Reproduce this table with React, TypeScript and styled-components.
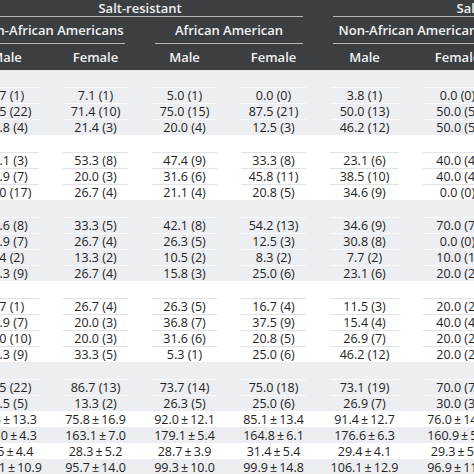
import * as React from "react";
import styled, { createGlobalStyle } from "styled-components";

const Colors = {
  HEAD_BG: "#3c3f42",
  HEAD_TEXT: "#f1f1f1",
  HEAD_RULE: "#b3b6b8",
  BAND: "#eceef1",
  WHITE: "#ffffff",
  TEXT: "#232323",
  RULE_ON_WHITE: "#e1e3e6",
  RULE_ON_BAND: "#f9fafb"
};

type Tone = "band" | "white";

const GlobalStyle = createGlobalStyle`
  body {
    margin: 0;
    background: ${Colors.WHITE};
    font-family: "Open Sans", "DejaVu Sans", sans-serif;
  }
`;

const Frame = styled.div`
  width: 474px;
  height: 474px;
  overflow: hidden;
`;

const Table = styled.table`
  margin-left: -38px;
  table-layout: fixed;
  border-collapse: separate;
  border-spacing: 0;
  width: 716px;
`;

const Col = styled.col<{ $w: number }>`
  width: ${(p) => p.$w}px;
`;

const HeadRow = styled.tr`
  background: ${Colors.HEAD_BG};
`;

const HeadCell = styled.th`
  padding: 0;
  color: ${Colors.HEAD_TEXT};
  font-size: 13px;
  font-weight: 600;
  text-align: center;
  white-space: nowrap;
`;

const HeadLabel = styled.span<{ $h: number; $rule?: boolean }>`
  display: block;
  height: ${(p) => p.$h}px;
  line-height: ${(p) => p.$h}px;
  margin: 0 ${(p) => (p.$rule ? 15 : 0)}px;
  border-bottom: ${(p) => (p.$rule ? `1px solid ${Colors.HEAD_RULE}` : "none")};
`;

const BodyRow = styled.tr<{ $tone: Tone }>`
  background: ${(p) => (p.$tone === "band" ? Colors.BAND : Colors.WHITE)};
`;

const Cell = styled.td`
  padding: 0;
`;

const Spacer = styled.div`
  height: 17px;
`;

const Value = styled.span<{ $tone: Tone; $ruled: boolean }>`
  display: block;
  margin: 0 12px;
  height: 15px;
  line-height: 16px;
  border-top: 1px solid
    ${(p) =>
      !p.$ruled
        ? "transparent"
        : p.$tone === "band"
        ? Colors.RULE_ON_BAND
        : Colors.RULE_ON_WHITE};
  color: ${Colors.TEXT};
  font-size: 12.5px;
  text-align: center;
  white-space: nowrap;
`;

const widths = [89, 89, 89, 89, 93, 93, 87, 87];

const groups: { tone: Tone; rows: string[][] }[] = [
  {
    tone: "band",
    rows: [
      ["3.7 (1)", "7.1 (1)", "5.0 (1)", "0.0 (0)", "3.8 (1)", "0.0 (0)", "4.2 (1)", "0.0 (0)"],
      ["81.5 (22)", "71.4 (10)", "75.0 (15)", "87.5 (21)", "50.0 (13)", "50.0 (5)", "62.5 (15)", "58.3 (7)"],
      ["14.8 (4)", "21.4 (3)", "20.0 (4)", "12.5 (3)", "46.2 (12)", "50.0 (5)", "33.3 (8)", "41.7 (5)"]
    ]
  },
  {
    tone: "white",
    rows: [
      ["11.1 (3)", "53.3 (8)", "47.4 (9)", "33.3 (8)", "23.1 (6)", "40.0 (4)", "37.5 (9)", "25.0 (3)"],
      ["25.9 (7)", "20.0 (3)", "31.6 (6)", "45.8 (11)", "38.5 (10)", "40.0 (4)", "41.7 (10)", "50.0 (6)"],
      ["63.0 (17)", "26.7 (4)", "21.1 (4)", "20.8 (5)", "34.6 (9)", "0.0 (0)", "20.8 (5)", "25.0 (3)"]
    ]
  },
  {
    tone: "band",
    rows: [
      ["29.6 (8)", "33.3 (5)", "42.1 (8)", "54.2 (13)", "34.6 (9)", "70.0 (7)", "45.8 (11)", "33.3 (4)"],
      ["25.9 (7)", "26.7 (4)", "26.3 (5)", "12.5 (3)", "30.8 (8)", "0.0 (0)", "20.8 (5)", "25.0 (3)"],
      ["7.4 (2)", "13.3 (2)", "10.5 (2)", "8.3 (2)", "7.7 (2)", "10.0 (1)", "12.5 (3)", "16.7 (2)"],
      ["33.3 (9)", "26.7 (4)", "15.8 (3)", "25.0 (6)", "23.1 (6)", "20.0 (2)", "20.8 (5)", "25.0 (3)"]
    ]
  },
  {
    tone: "white",
    rows: [
      ["3.7 (1)", "26.7 (4)", "26.3 (5)", "16.7 (4)", "11.5 (3)", "20.0 (2)", "16.7 (4)", "8.3 (1)"],
      ["25.9 (7)", "20.0 (3)", "36.8 (7)", "37.5 (9)", "15.4 (4)", "40.0 (4)", "29.2 (7)", "33.3 (4)"],
      ["37.0 (10)", "20.0 (3)", "31.6 (6)", "20.8 (5)", "26.9 (7)", "20.0 (2)", "25.0 (6)", "33.3 (4)"],
      ["33.3 (9)", "33.3 (5)", "5.3 (1)", "25.0 (6)", "46.2 (12)", "20.0 (2)", "29.2 (7)", "25.0 (3)"]
    ]
  },
  {
    tone: "band",
    rows: [
      ["81.5 (22)", "86.7 (13)", "73.7 (14)", "75.0 (18)", "73.1 (19)", "70.0 (7)", "79.2 (19)", "75.0 (9)"],
      ["18.5 (5)", "13.3 (2)", "26.3 (5)", "25.0 (6)", "26.9 (7)", "30.0 (3)", "20.8 (5)", "25.0 (3)"]
    ]
  }
];

const pm = (a: string, b: string) => `${a}\u2009±\u2009${b}`;

const stats: string[][] = [
  [pm("80.8", "13.3"), pm("75.8", "16.9"), pm("92.0", "12.1"), pm("85.1", "13.4"), pm("91.4", "12.7"), pm("76.0", "14.2"), pm("90.2", "13.8"), pm("82.4", "15.1")],
  [pm("174.0", "4.3"), pm("163.1", "7.0"), pm("179.1", "5.4"), pm("164.8", "6.1"), pm("176.6", "6.3"), pm("160.9", "5.5"), pm("177.9", "6.0"), pm("163.5", "6.6")],
  [pm("26.5", "4.4"), pm("28.3", "5.2"), pm("28.7", "3.9"), pm("31.4", "5.4"), pm("29.4", "4.1"), pm("29.3", "5.6"), pm("28.5", "4.0"), pm("30.8", "5.9")],
  [pm("100.1", "10.9"), pm("95.7", "14.0"), pm("99.3", "10.0"), pm("99.9", "14.8"), pm("106.1", "12.9"), pm("96.9", "11.0"), pm("103.0", "11.7"), pm("98.2", "13.5")]
];

const DataRow: React.FC<{ tone: Tone; values: string[]; ruled: boolean }> = ({
  tone,
  values,
  ruled
}) => (
  <BodyRow $tone={tone}>
    {values.map((v, i) => (
      <Cell key={i}>
        <Value $tone={tone} $ruled={ruled}>
          {v}
        </Value>
      </Cell>
    ))}
  </BodyRow>
);

const App: React.FC = () => (
  <Frame>
    <GlobalStyle />
    <Table>
      <colgroup>
        {widths.map((w, i) => (
          <Col key={i} $w={w} />
        ))}
      </colgroup>
      <thead>
        <HeadRow>
          {["Salt-resistant", "Salt-sensitive"].map((t) => (
            <HeadCell key={t} colSpan={4}>
              <HeadLabel $h={16} $rule>
                {t}
              </HeadLabel>
            </HeadCell>
          ))}
        </HeadRow>
        <HeadRow>
          {["Non-African Americans", "African American", "Non-African Americans", "African American"].map(
            (t, i) => (
              <HeadCell key={i} colSpan={2}>
                <HeadLabel $h={26} $rule>
                  {t}
                </HeadLabel>
              </HeadCell>
            )
          )}
        </HeadRow>
        <HeadRow>
          {widths.map((_, i) => (
            <HeadCell key={i}>
              <HeadLabel $h={26}>{i % 2 === 0 ? "Male" : "Female"}</HeadLabel>
            </HeadCell>
          ))}
        </HeadRow>
      </thead>
      <tbody>
        {groups.map((g, gi) => (
          <React.Fragment key={gi}>
            <BodyRow $tone={g.tone}>
              {widths.map((_, i) => (
                <Cell key={i}>
                  <Spacer />
                </Cell>
              ))}
            </BodyRow>
            {g.rows.map((r, ri) => (
              <DataRow key={ri} tone={g.tone} values={r} ruled />
            ))}
          </React.Fragment>
        ))}
        {stats.map((r, ri) => (
          <DataRow key={ri} tone={ri % 2 === 0 ? "white" : "band"} values={r} ruled={false} />
        ))}
      </tbody>
    </Table>
  </Frame>
);

export default App;
